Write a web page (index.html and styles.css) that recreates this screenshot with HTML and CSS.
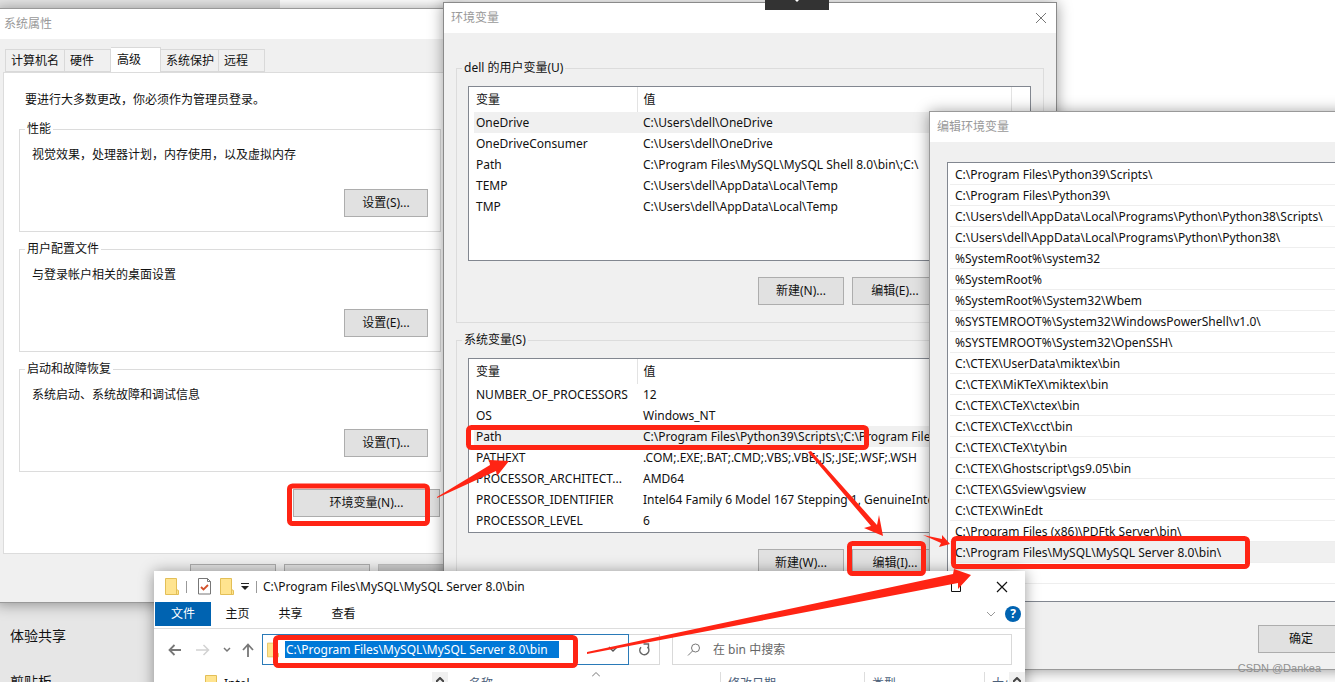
FILE: index.html
```html
<!DOCTYPE html>
<html lang="zh-CN">
<head>
    <meta charset="UTF-8">
    <meta name="viewport" content="width=device-width, initial-scale=1.0">
    <title>环境变量</title>
    <link rel="stylesheet" href="styles.css">
</head>
<body>
    <div class="desktop">
        <aside class="settings">
            <a class="settings-link" href="#">体验共享</a>
            <a class="settings-link" href="#">剪贴板</a>
        </aside>

        <section class="window win-system">
            <h2 class="title">系统属性</h2>
            <div class="tabs">
                <button class="tab">计算机名</button>
                <button class="tab">硬件</button>
                <button class="tab active">高级</button>
                <button class="tab">系统保护</button>
                <button class="tab">远程</button>
            </div>
            <div class="tab-page">
                <p class="note">要进行大多数更改，你必须作为管理员登录。</p>
                <fieldset class="group">
                    <legend>性能</legend>
                    <p>视觉效果，处理器计划，内存使用，以及虚拟内存</p>
                    <button class="btn">设置(S)...</button>
                </fieldset>
                <fieldset class="group">
                    <legend>用户配置文件</legend>
                    <p>与登录帐户相关的桌面设置</p>
                    <button class="btn">设置(E)...</button>
                </fieldset>
                <fieldset class="group">
                    <legend>启动和故障恢复</legend>
                    <p>系统启动、系统故障和调试信息</p>
                    <button class="btn">设置(T)...</button>
                </fieldset>
                <button class="btn btn-env">环境变量(N)...</button>
            </div>
            <div class="footer">
                <button class="btn" aria-label="确定"></button>
                <button class="btn" aria-label="取消"></button>
                <button class="btn" aria-label="应用" disabled></button>
            </div>
        </section>

        <section class="window win-env">
            <div class="title-bar">
                <h2 class="title">环境变量</h2>
                <button class="close" aria-label="关闭">
                    <svg width="12" height="12" viewBox="0 0 12 12"><path d="M1 1l10 10M11 1L1 11" stroke="#777" fill="none"/></svg>
                </button>
            </div>
            <fieldset class="vars">
                <legend>dell 的用户变量(U)</legend>
                <div class="list">
                    <table>
                        <thead>
                            <tr><th class="name">变量</th><th>值</th><th class="end"></th></tr>
                        </thead>
                        <tbody>
                            <tr class="selected"><td>OneDrive</td><td colspan="2">C:\Users\dell\OneDrive</td></tr>
                            <tr><td>OneDriveConsumer</td><td colspan="2">C:\Users\dell\OneDrive</td></tr>
                            <tr><td>Path</td><td colspan="2">C:\Program Files\MySQL\MySQL Shell 8.0\bin\;C:\</td></tr>
                            <tr><td>TEMP</td><td colspan="2">C:\Users\dell\AppData\Local\Temp</td></tr>
                            <tr><td>TMP</td><td colspan="2">C:\Users\dell\AppData\Local\Temp</td></tr>
                        </tbody>
                    </table>
                </div>
                <div class="actions">
                    <button class="btn">新建(N)...</button>
                    <button class="btn">编辑(E)...</button>
                </div>
            </fieldset>
            <fieldset class="vars">
                <legend>系统变量(S)</legend>
                <div class="list">
                    <table>
                        <thead>
                            <tr><th class="name">变量</th><th>值</th><th class="end"></th></tr>
                        </thead>
                        <tbody>
                            <tr><td>NUMBER_OF_PROCESSORS</td><td colspan="2">12</td></tr>
                            <tr><td>OS</td><td colspan="2">Windows_NT</td></tr>
                            <tr class="selected"><td>Path</td><td colspan="2">C:\Program Files\Python39\Scripts\;C:\Program Files</td></tr>
                            <tr><td>PATHEXT</td><td colspan="2">.COM;.EXE;.BAT;.CMD;.VBS;.VBE;.JS;.JSE;.WSF;.WSH</td></tr>
                            <tr><td>PROCESSOR_ARCHITECT...</td><td colspan="2">AMD64</td></tr>
                            <tr><td>PROCESSOR_IDENTIFIER</td><td colspan="2">Intel64 Family 6 Model 167 Stepping 1, GenuineIntel</td></tr>
                            <tr><td>PROCESSOR_LEVEL</td><td colspan="2">6</td></tr>
                        </tbody>
                    </table>
                </div>
                <div class="actions">
                    <button class="btn">新建(W)...</button>
                    <button class="btn">编辑(I)...</button>
                </div>
            </fieldset>
        </section>

        <section class="window win-edit">
            <h2 class="title">编辑环境变量</h2>
            <ul class="paths">
                <li>C:\Program Files\Python39\Scripts\</li>
                <li>C:\Program Files\Python39\</li>
                <li>C:\Users\dell\AppData\Local\Programs\Python\Python38\Scripts\</li>
                <li>C:\Users\dell\AppData\Local\Programs\Python\Python38\</li>
                <li>%SystemRoot%\system32</li>
                <li>%SystemRoot%</li>
                <li>%SystemRoot%\System32\Wbem</li>
                <li>%SYSTEMROOT%\System32\WindowsPowerShell\v1.0\</li>
                <li>%SYSTEMROOT%\System32\OpenSSH\</li>
                <li>C:\CTEX\UserData\miktex\bin</li>
                <li>C:\CTEX\MiKTeX\miktex\bin</li>
                <li>C:\CTEX\CTeX\ctex\bin</li>
                <li>C:\CTEX\CTeX\cct\bin</li>
                <li>C:\CTEX\CTeX\ty\bin</li>
                <li>C:\CTEX\Ghostscript\gs9.05\bin</li>
                <li>C:\CTEX\GSview\gsview</li>
                <li>C:\CTEX\WinEdt</li>
                <li>C:\Program Files (x86)\PDFtk Server\bin\</li>
                <li class="selected">C:\Program Files\MySQL\MySQL Server 8.0\bin\</li>
                <li></li>
            </ul>
            <button class="btn btn-ok">确定</button>
        </section>

        <section class="window win-explorer">
            <div class="ex-title">
                <svg class="folder" width="14" height="17" viewBox="0 0 14 17"><path d="M.5.5h11v11l2 1v4H.5z" fill="#ffe48f" stroke="#e3bf57"/><path d="M11.500 11v5" stroke="#e3bf57"/></svg>
                <span class="sep"></span>
                <svg class="check" width="13" height="17" viewBox="0 0 13 17"><path d="M.5.5h9l3 3v12.500H.5z" fill="#fff" stroke="#777"/><path d="M9.500.5v3h3" fill="none" stroke="#777"/><path d="M3 9l2.500 2.500L10 7" fill="none" stroke="#d2502a" stroke-width="1.800"/></svg>
                <svg class="folder" width="14" height="17" viewBox="0 0 14 17"><path d="M.5.5h11v11l2 1v4H.5z" fill="#ffe48f" stroke="#e3bf57"/><path d="M11.500 11v5" stroke="#e3bf57"/></svg>
                <svg width="8" height="7" viewBox="0 0 8 7"><path d="M0 0h8v1H0zM0 3h8L4 7z" fill="#222"/></svg>
                <span class="sep"></span>
                <h2>C:\Program Files\MySQL\MySQL Server 8.0\bin</h2>
                <button class="icon-btn" aria-label="最大化"><svg width="12" height="12" viewBox="0 0 12 12"><path d="M1.500 1.500h9v9h-9z" fill="none" stroke="#111"/></svg></button>
                <button class="icon-btn" aria-label="关闭"><svg width="12" height="12" viewBox="0 0 12 12"><path d="M1 1l10 10M11 1L1 11" fill="none" stroke="#111" stroke-width="1.200"/></svg></button>
            </div>
            <nav class="ribbon">
                <a class="file" href="#">文件</a>
                <a href="#">主页</a>
                <a href="#">共享</a>
                <a href="#">查看</a>
                <button class="expand" aria-label="展开功能区"><svg width="10" height="6" viewBox="0 0 10 6"><path d="M1 1l4 4 4-4" fill="none" stroke="#999"/></svg></button>
                <button class="help">?</button>
            </nav>
            <div class="nav-row">
                <button class="icon-btn" aria-label="后退"><svg width="14" height="12" viewBox="0 0 14 12"><path d="M13 6H2M6.500 1L1.500 6l5 5" fill="none" stroke="#777" stroke-width="1.800"/></svg></button>
                <button class="icon-btn" aria-label="前进"><svg width="14" height="12" viewBox="0 0 14 12"><path d="M0 6h12M7.500 1l5 5-5 5" fill="none" stroke="#d2d2d2" stroke-width="1.500"/></svg></button>
                <button class="icon-btn" aria-label="最近位置"><svg width="8" height="6" viewBox="0 0 8 6"><path d="M1 1l3 3 3-3" fill="none" stroke="#777" stroke-width="1.500"/></svg></button>
                <button class="icon-btn" aria-label="上移"><svg width="12" height="14" viewBox="0 0 12 14"><path d="M6 14V2M1 7l5-5.500L11 7" fill="none" stroke="#777" stroke-width="1.800"/></svg></button>
                <div class="address">
                    <svg width="12" height="16" viewBox="0 0 14 17"><path d="M.5.5h11v11l2 1v4H.5z" fill="#ffe48f" stroke="#e3bf57"/></svg>
                    <input type="text" aria-label="地址" value="C:\Program Files\MySQL\MySQL Server 8.0\bin">
                    <svg class="drop" width="10" height="7" viewBox="0 0 10 7"><path d="M1 1l4 4 4-4" fill="none" stroke="#555" stroke-width="1.500"/></svg>
                </div>
                <button class="refresh" aria-label="刷新"><svg width="12" height="13" viewBox="0 0 12 13"><path d="M9.500 4A4.500 4.500 0 1 1 3 4.200" fill="none" stroke="#666" stroke-width="1.600"/><path d="M5.500 1h5v4.500" fill="none" stroke="#666" stroke-width="1.400"/></svg></button>
                <label class="search">
                    <svg width="14" height="14" viewBox="0 0 14 14"><circle cx="8.500" cy="5" r="4" fill="none" stroke="#777"/><path d="M5.500 8L1 12.500" stroke="#777"/></svg>
                    <input type="text" aria-label="搜索" placeholder="在 bin 中搜索">
                </label>
            </div>
            <div class="files">
                <div class="tree">
                    <svg width="12" height="17" viewBox="0 0 12 17"><path d="M.5.5h11v16H.5z" fill="#ffe48f" stroke="#e3bf57"/></svg>
                    <span>Intel</span>
                </div>
                <span class="scroll"><svg width="8" height="6" viewBox="0 0 8 6"><path d="M0 5l4-4 4 4" fill="none" stroke="#444" stroke-width="2"/></svg></span>
                <span class="col col-name">名称 <svg width="8" height="5" viewBox="0 0 8 5"><path d="M0 4.500L4 .5l4 4" fill="none" stroke="#777"/></svg></span>
                <span class="col col-date">修改日期</span>
                <span class="col col-type">类型</span>
                <span class="col col-size">大小</span>
                <span class="scroll"><svg width="8" height="6" viewBox="0 0 8 6"><path d="M0 5l4-4 4 4" fill="none" stroke="#444" stroke-width="2"/></svg></span>
            </div>
        </section>

        <div class="notch"><svg width="4" height="2" viewBox="0 0 4 2"><path d="M0 0h4L2 2z" fill="#fff"/></svg></div>

        <!-- red marks over the windows -->
        <svg class="marks" width="1335" height="682" viewBox="0 0 1335 682">
            <g fill="none" stroke="#ff2414" stroke-width="5">
                <rect x="289.500" y="486" width="138" height="37.500" rx="3"/>
                <rect x="468.500" y="427.500" width="398" height="20" rx="3"/>
                <rect x="849.500" y="543.500" width="74" height="30" rx="3"/>
                <rect x="953.500" y="538.500" width="294" height="28" rx="3"/>
                <rect x="275.500" y="637.500" width="300" height="28" rx="3"/>
            </g>
            <g fill="#ff2414">
                <path d="M437 497l53-32-1-5 20 1-12 15-1-5-59 27z"/>
                <path d="M808 452l3-1 66 74 2-10 4 21-19-8 7-2z"/>
                <path d="M923 535l19 4v-4l8 9-11 3 2-4z"/>
                <path d="M587 652l366-78 1-5 17 6-13 14v-6l-371 71z"/>
            </g>
        </svg>
        <span class="watermark">CSDN @Dankea</span>
    </div>
</body>
</html>
```
FILE: styles.css
```css
* {
    box-sizing: border-box;
}
body {
    margin: 0;
    font-family: "Noto Sans", "Noto Sans CJK SC", sans-serif;
    font-size: 12px;
    line-height: 18px;
    color: #111;
}
button, input {
    font: inherit;
    color: inherit;
}
button {
    padding: 0;
}
h2, p, ul {
    margin: 0;
    padding: 0;
    font-size: 12px;
    font-weight: normal;
}
a {
    color: inherit;
    text-decoration: none;
}
svg {
    display: block;
    flex: none;
}
.desktop {
    position: relative;
    height: 100vh;
    overflow: hidden;
    background: #fff;
}
.settings {
    width: 280px;
    height: 100%;
    padding: 625px 10px 0;
    background: #e6e6e6;
}
.settings-link {
    display: block;
    margin-bottom: 24px;
    font-size: 14px;
    line-height: 22px;
}

/* windows */
.window {
    position: absolute;
    background: #f0f0f0;
    border: 1px solid #999;
    box-shadow: 0 1px 14px rgba(0, 0, 0, 0.4);
}
.title {
    height: 30px;
    padding-left: 7px;
    line-height: 30px;
    color: #999;
    background: #fff;
}
.btn {
    flex: none;
    width: 86px;
    height: 28px;
    background: #e1e1e1;
    border: 1px solid #adadad;
}
.btn:disabled {
    background: #ccc;
    border-color: #bfbfbf;
}
fieldset {
    margin: 0;
    min-width: 0;
    padding: 0 12px;
    border: 1px solid #dcdcdc;
}
legend {
    margin-left: -7px;
    padding: 0 2px;
}

.win-system {
    left: -4px;
    top: 8px;
    width: 460px;
    height: 595px;
}
.tabs {
    display: flex;
    align-items: flex-end;
    height: 33px;
    padding-left: 8px;
}
.tab {
    height: 23px;
    padding: 0 16px 0 5px;
    background: #f0f0f0;
    border: 1px solid #d9d9d9;
    border-left: 0;
}
.tab:first-child {
    padding-right: 5px;
    border-left: 1px solid #d9d9d9;
}
.tab:nth-child(4) {
    padding-right: 4px;
}
.tab.active {
    height: 25px;
    padding: 0 19px 0 6px;
    background: #fff;
    border-bottom: 0;
}
.tab-page {
    display: flex;
    flex-direction: column;
    gap: 8px;
    height: 482px;
    margin-left: 6px;
    padding: 18px 15px 0;
    background: #fff;
    border: 1px solid #dcdcdc;
}
.note {
    margin-bottom: 3px;
    padding-left: 6px;
}
.group {
    display: flex;
    flex-direction: column;
    width: 422px;
    height: 112px;
}
.group p {
    padding-top: 8px;
}
.group .btn {
    width: 84px;
    margin: 25px 0 0 auto;
}
.btn-env {
    align-self: flex-start;
    width: 147px;
    margin: 9px 0 0 274px;
}
.footer {
    display: flex;
    gap: 8px;
    padding: 10px 0 0 193px;
}

.win-env {
    left: 443px;
    top: 2px;
    width: 614px;
    height: 610px;
    border-color: #8a8a8a;
}
.title-bar {
    display: flex;
    margin-bottom: 26px;
    background: #fff;
}
.title-bar .title {
    flex: 1;
}
.close, .icon-btn {
    display: flex;
    align-items: center;
    justify-content: center;
    width: 30px;
    background: none;
    border: 0;
}
.vars {
    height: 264px;
    margin: 0 12px 8px;
    padding: 0 12px 0 11px;
}
.vars legend {
    margin-left: -6px;
}
.vars .list {
    height: 175px;
    margin-top: 9px;
    padding: 0 5px;
    background: #fff;
    border: 1px solid #828790;
}
table {
    width: 100%;
    table-layout: fixed;
    border-collapse: collapse;
}
th, td {
    height: 21px;
    padding: 0 0 0 6px;
    font-weight: normal;
    text-align: left;
    white-space: nowrap;
}
th {
    height: 25px;
    border-right: 1px solid #e3e3e3;
}
th.end {
    width: 14px;
    border: 0;
}
th.name {
    width: 163px;
}
tr > :first-child {
    padding-left: 2px;
}
.selected {
    background: #f0f0f0;
}
.actions {
    display: flex;
    gap: 8px;
    margin: 16px 0 0 290px;
}

.win-edit {
    left: 929px;
    top: 111px;
    right: -20px;
    height: 559px;
}
.paths {
    height: 440px;
    margin: 20px 0 23px 17px;
    background: #fff;
    border: 1px solid #828790;
    list-style: none;
}
.paths li {
    height: 21px;
    margin-left: 2px;
    padding: 2px 0 0 5px;
    white-space: nowrap;
    border-bottom: 1px solid #eee;
}
.paths li:first-child {
    height: 22px;
    padding-top: 3px;
}
.btn-ok {
    display: block;
    margin: 0 10px 0 auto;
}

/* file explorer */
.win-explorer {
    left: 154px;
    top: 571px;
    width: 871px;
    height: 150px;
    background: #fff;
    border: 0;
}
.ex-title {
    display: flex;
    align-items: center;
    height: 31px;
    padding-left: 11px;
}
.ex-title h2 {
    flex: 1;
    padding-left: 6px;
}
.ex-title .icon-btn {
    width: 46px;
}
.sep {
    width: 1px;
    height: 12px;
    margin-left: 7px;
    background: #999;
}
.sep + .check {
    margin-left: 11px;
}
.check + .folder {
    margin: 0 7px 0 9px;
}
.ribbon {
    display: flex;
    align-items: center;
    height: 27px;
    padding: 0 4px 3px 1px;
    border-bottom: 1px solid #ddd;
}
.ribbon a {
    width: 53px;
    line-height: 24px;
    text-align: center;
}
.ribbon .file {
    width: 56px;
    color: #fff;
    background: #0063b1;
}
.expand {
    margin-left: auto;
    background: none;
    border: 0;
}
.help {
    width: 16px;
    height: 16px;
    margin-left: 9px;
    font-weight: bold;
    line-height: 16px;
    color: #fff;
    background: #0063b1;
    border: 0;
    border-radius: 50%;
}
.nav-row {
    display: flex;
    height: 43px;
    padding: 5px 13px 7px 7px;
}
.nav-row .icon-btn {
    width: 28px;
}
.nav-row .icon-btn:nth-child(3) {
    width: 20px;
}
.nav-row .icon-btn:nth-child(4) {
    width: 22px;
}
.address {
    display: flex;
    align-items: center;
    width: 367px;
    margin-left: 3px;
    padding-left: 4px;
    border: 1px solid #2a7ab8;
}
.address input {
    width: 274px;
    height: 17px;
    margin-left: 6px;
    padding: 0 1px;
    color: #fff;
    background: #0078d7;
    border: 0;
}
.drop {
    margin: 0 10px 0 auto;
}
.refresh {
    display: flex;
    align-items: center;
    justify-content: center;
    width: 31px;
    background: #fff;
    border: 1px solid #d9d9d9;
    border-left: 0;
}
.search {
    display: flex;
    flex: 1;
    align-items: center;
    gap: 12px;
    margin-left: 12px;
    padding-left: 14px;
    border: 1px solid #d9d9d9;
}
.search input {
    flex: 1;
    border: 0;
    padding: 0;
}
.search input::placeholder {
    color: #666;
}
.files {
    display: flex;
    height: 48px;
}
.tree {
    display: flex;
    gap: 7px;
    width: 278px;
    padding: 3px 0 0 51px;
}
.scroll {
    display: flex;
    justify-content: center;
    width: 16px;
    padding-top: 5px;
    background: #f0f0f0;
}
.col {
    padding: 3px 0 0 7px;
    color: #4c607a;
    border-right: 1px solid #ddd;
}
.col-name {
    display: flex;
    gap: 99px;
    width: 273px;
    padding-left: 21px;
}
.col-name svg {
    margin-top: -3px;
}
.col-date {
    width: 144px;
}
.col-type {
    width: 120px;
}
.col-size {
    flex: 1;
    overflow: hidden;
    border: 0;
    white-space: nowrap;
}

.notch {
    position: absolute;
    left: 765px;
    top: 0;
    display: flex;
    justify-content: center;
    width: 64px;
    height: 10px;
    background: #333;
}
.marks {
    position: absolute;
    left: 0;
    top: 0;
}
.watermark {
    position: absolute;
    right: 14px;
    bottom: 5px;
    font-family: "Liberation Sans", sans-serif;
    font-size: 11px;
    color: #909090;
}
```
